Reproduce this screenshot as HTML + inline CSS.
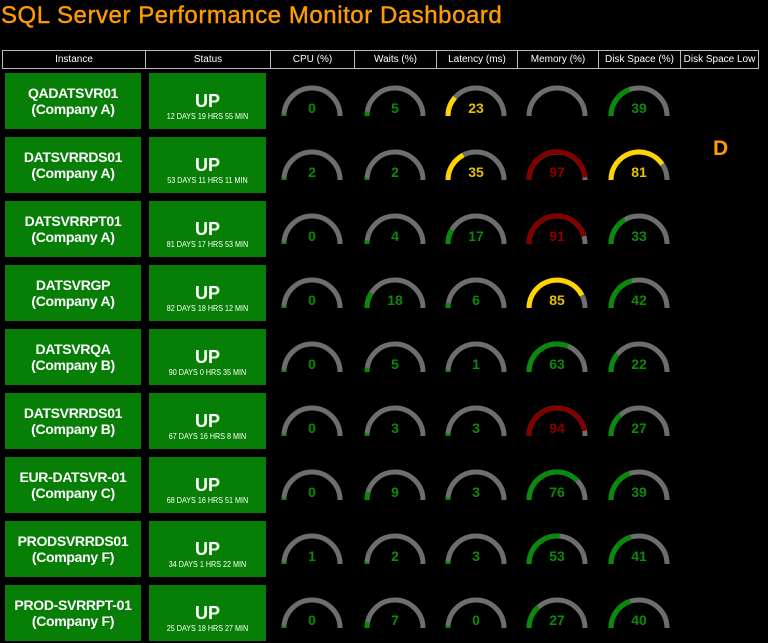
<!DOCTYPE html>
<html><head><meta charset="utf-8"><style>
body{margin:0;width:768px;height:643px;background:#000;overflow:hidden;font-family:"Liberation Sans",sans-serif;position:relative}
.t{position:absolute;left:1px;top:2px;color:#ff9a00;font-size:24px;letter-spacing:0.55px;-webkit-text-stroke:0.4px #ff9a00}
.h{position:absolute;top:50px;height:19px;border:1px solid #bbb;box-sizing:border-box;color:#fff;font-size:10px;text-align:center;line-height:18px}
.b{position:absolute;background:#077f07;color:#fff;text-align:center;box-sizing:border-box}
.i{left:5px;width:136px;height:56px;font-weight:bold;font-size:14px;line-height:16px;padding-top:12px;letter-spacing:-0.3px}
.s{left:149px;width:117px;height:56px}
.s b{display:block;font-size:18px;margin-top:18px;line-height:20px}
.s span{display:block;font-size:8px;line-height:10px;margin-top:1px;transform:scaleX(.9)}
svg{position:absolute;left:0;top:0}
.d{position:absolute;left:713px;top:137px;color:#ff9a00;font-weight:bold;font-size:21px}
</style></head><body>
<div class="t">SQL Server Performance Monitor Dashboard</div>
<div class="h" style="left:2px;width:144px">Instance</div>
<div class="h" style="left:145px;width:126px">Status</div>
<div class="h" style="left:270px;width:85px">CPU (%)</div>
<div class="h" style="left:354px;width:83px">Waits (%)</div>
<div class="h" style="left:436px;width:82px">Latency (ms)</div>
<div class="h" style="left:517px;width:82px">Memory (%)</div>
<div class="h" style="left:598px;width:83px">Disk Space (%)</div>
<div class="h" style="left:680px;width:79px">Disk Space Low</div>
<div class="d">D</div>
<div id="c"></div>
<svg id="g" width="768" height="643"></svg>
<script>
var rows=[
["QADATSVR01","Company A","12 DAYS 19 HRS 55 MIN",[[0,'g'],[5,'g'],[23,'y'],[null,'g'],[39,'g']]],
["DATSVRRDS01","Company A","53 DAYS 11 HRS 11 MIN",[[2,'g'],[2,'g'],[35,'y'],[97,'r'],[81,'y']]],
["DATSVRRPT01","Company A","81 DAYS 17 HRS 53 MIN",[[0,'g'],[4,'g'],[17,'g'],[91,'r'],[33,'g']]],
["DATSVRGP","Company A","82 DAYS 18 HRS 12 MIN",[[0,'g'],[18,'g'],[6,'g'],[85,'y'],[42,'g']]],
["DATSVRQA","Company B","90 DAYS 0 HRS 35 MIN",[[0,'g'],[5,'g'],[1,'g'],[63,'g'],[22,'g']]],
["DATSVRRDS01","Company B","67 DAYS 16 HRS 8 MIN",[[0,'g'],[3,'g'],[3,'g'],[94,'r'],[27,'g']]],
["EUR-DATSVR-01","Company C","68 DAYS 16 HRS 51 MIN",[[0,'g'],[9,'g'],[3,'g'],[76,'g'],[39,'g']]],
["PRODSVRRDS01","Company F","34 DAYS 1 HRS 22 MIN",[[1,'g'],[2,'g'],[3,'g'],[53,'g'],[41,'g']]],
["PROD-SVRRPT-01","Company F","25 DAYS 18 HRS 27 MIN",[[0,'g'],[7,'g'],[0,'g'],[27,'g'],[40,'g']]]];
var col={g:['#0a8a0a','#0a8a0a'],y:['#ffd400','#e6c000'],r:['#800000','#8a0000']};
var cx=[312,395,476,557,639],h='',s='',r=28;
rows.forEach(function(w,k){var top=73+k*64;
h+='<div class="b i" style="top:'+top+'px">'+w[0]+'<br>('+w[1]+')</div><div class="b s" style="top:'+top+'px"><b>UP</b><span>'+w[2]+'</span></div>';
var cy=top+43;
w[3].forEach(function(v,j){var x=cx[j];
s+='<path d="M'+(x-r)+' '+cy+' A'+r+' '+r+' 0 0 1 '+(x+r)+' '+cy+'" fill="none" stroke="#6e6e6e" stroke-width="5"/>';
if(v[0]!==null){var f=Math.max(v[0],2)/100,a=Math.PI*(1-f),ex=x+r*Math.cos(a),ey=cy-r*Math.sin(a);
if(v[0]>0||j==1)s+='<path d="M'+(x-r)+' '+cy+' A'+r+' '+r+' 0 0 1 '+ex.toFixed(1)+' '+ey.toFixed(1)+'" fill="none" stroke="'+col[v[1]][0]+'" stroke-width="5"/>';
else s+='<path d="M'+(x-r)+' '+cy+' l0 -2" stroke="'+col.g[0]+'" stroke-width="5"/>';
s+='<text x="'+x+'" y="'+(cy-3)+'" text-anchor="middle" font-family="Liberation Sans" font-weight="bold" font-size="14" fill="'+col[v[1]][1]+'">'+v[0]+'</text>';}
});});
document.getElementById('c').innerHTML=h;document.getElementById('g').innerHTML=s;
</script>
</body></html>
